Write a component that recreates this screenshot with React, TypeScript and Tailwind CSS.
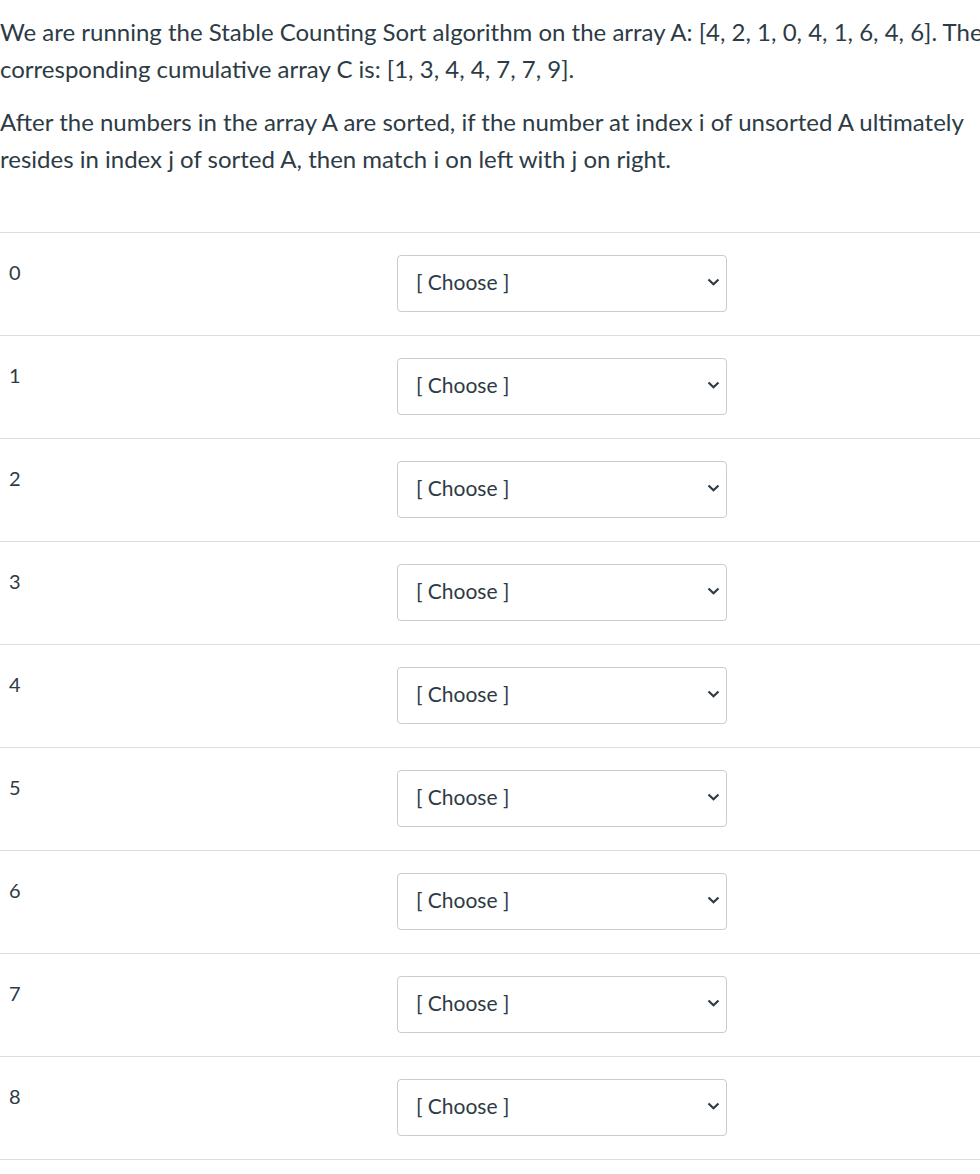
const rows = [0, 1, 2, 3, 4, 5, 6, 7, 8];

function Chevron() {
  return (
    <svg width="13" height="8" viewBox="0 0 13 8" className="text-[#2d3b45]">
      <path d="M1.5 1.5 L6.5 6.2 L11.5 1.5" fill="none" stroke="currentColor" strokeWidth="2.2" />
    </svg>
  );
}

export default function App() {
  return (
    <div className="bg-white text-[#2d3b45] font-['Lato','Liberation_Sans',sans-serif] w-[980px] overflow-hidden">
      <div className="pt-[13px] text-[24px] leading-[37px] whitespace-nowrap">
        <p>We are running the Stable Counting Sort algorithm on the array A: [4, 2, 1, 0, 4, 1, 6, 4, 6]. The</p>
        <p>corresponding cumulative array C is: [1, 3, 4, 4, 7, 7, 9].</p>
        <p className="mt-[16px]">After the numbers in the array A are sorted, if the number at index i of unsorted A ultimately</p>
        <p>resides in index j of sorted A, then match i on left with j on right.</p>
      </div>
      <div className="mt-[55px] border-t border-[#dcdfe1]">
        {rows.map((r) => (
          <div key={r} className="flex border-b border-[#dcdfe1] h-[103px] pt-[22px]">
            <div className="w-[397px] pl-[9px] pt-[3px] text-[20px] leading-[28px]">{r}</div>
            <div className="w-[330px] h-[57px] border border-[#c7cdd1] rounded-[4px] flex items-center justify-between pl-[18px] pr-[6px] pb-[3px] text-[21px]">
              <span>[ Choose ]</span>
              <Chevron />
            </div>
          </div>
        ))}
      </div>
    </div>
  );
}
